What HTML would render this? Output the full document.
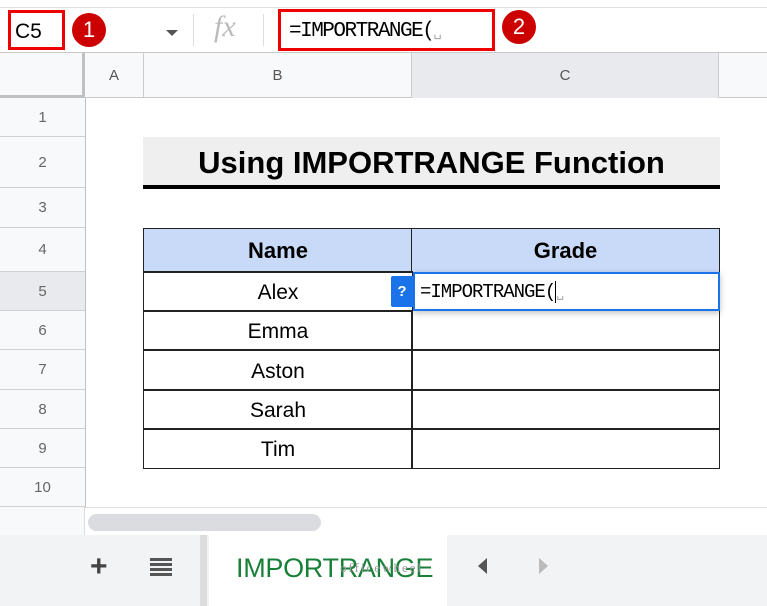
<!DOCTYPE html>
<html><head><style>
*{margin:0;padding:0;box-sizing:border-box}
body{width:767px;height:606px;overflow:hidden;background:#fff;font-family:"Liberation Sans",Arial,sans-serif;position:relative}
.a{position:absolute}
.rn{position:absolute;left:0;width:85px;background:#f8f9fa;border-bottom:1px solid #d0d0d0;color:#666;font-size:15px;text-align:center}
.cell{position:absolute;border:1.5px solid #222;text-align:center;font-size:21px;color:#000}
</style></head><body>
<div class="a" style="left:0;top:0;width:767px;height:8px;background:#fff;border-bottom:1px solid #e0e0e0"></div>
<div class="a" style="left:0;top:52px;width:767px;height:1px;background:#c8c8c8"></div>
<div class="a" style="left:8px;top:10px;width:57px;height:40px;border:3px solid #e00;font-size:21px;padding:7px 0 0 4px">C5</div>
<div class="a" style="left:72px;top:13px;width:34px;height:34px;border-radius:50%;background:#c00;color:#fff;font-size:22px;text-align:center;line-height:34px">1</div>
<div class="a" style="left:166px;top:30px;width:0;height:0;border-left:6px solid transparent;border-right:6px solid transparent;border-top:6px solid #555"></div>
<div class="a" style="left:193px;top:14px;width:1px;height:32px;background:#ddd"></div>
<div class="a" style="left:214px;top:10px;font-family:'Liberation Serif',serif;font-style:italic;font-size:30px;color:#bbb">fx</div>
<div class="a" style="left:263px;top:14px;width:1px;height:32px;background:#ddd"></div>
<div class="a" style="left:278px;top:9px;width:217px;height:42px;border:3px solid #e00;font-family:'Liberation Mono',monospace;font-size:21px;padding:8px 0 0 8px;letter-spacing:-1.5px">=IMPORTRANGE(<span style="color:#aaa;font-size:14px">␣</span></div>
<div class="a" style="left:502px;top:10px;width:34px;height:34px;border-radius:50%;background:#c00;color:#fff;font-size:22px;text-align:center;line-height:34px">2</div>
<div class="a" style="left:0;top:53px;width:767px;height:45px;background:#f8f9fa;border-bottom:1px solid #c8c8c8"></div>
<div class="a" style="left:0;top:53px;width:85px;height:45px;border-right:3px solid #c0c0c0;border-bottom:3px solid #c0c0c0"></div>
<div class="a" style="left:412px;top:53px;width:307px;height:45px;background:#e8eaed"></div>
<div class="a" style="left:85px;top:53px;width:59px;height:45px;border-right:1px solid #ccc;text-align:center;line-height:45px;color:#555;font-size:15px">A</div>
<div class="a" style="left:144px;top:53px;width:268px;height:45px;border-right:1px solid #ccc;text-align:center;line-height:45px;color:#555;font-size:15px">B</div>
<div class="a" style="left:412px;top:53px;width:307px;height:45px;border-right:1px solid #ccc;text-align:center;line-height:45px;color:#555;font-size:15px">C</div>
<div class="a" style="left:85px;top:98px;width:1px;height:437px;background:#c0c0c0"></div>
<div class="rn" style="top:98px;height:39px;line-height:39px">1</div>
<div class="rn" style="top:137px;height:51px;line-height:51px">2</div>
<div class="rn" style="top:188px;height:40px;line-height:40px">3</div>
<div class="rn" style="top:228px;height:44px;line-height:44px">4</div>
<div class="rn" style="top:272px;height:39px;line-height:39px;background:#e8eaed">5</div>
<div class="rn" style="top:311px;height:39px;line-height:39px">6</div>
<div class="rn" style="top:350px;height:40px;line-height:40px">7</div>
<div class="rn" style="top:390px;height:39px;line-height:39px">8</div>
<div class="rn" style="top:429px;height:39px;line-height:39px">9</div>
<div class="rn" style="top:468px;height:39px;line-height:39px">10</div>
<div class="a" style="left:143px;top:137px;width:577px;height:52px;background:#efefef;border-bottom:4px solid #000;text-align:center;font-weight:bold;font-size:31px;line-height:52px">Using IMPORTRANGE Function</div>
<div class="cell" style="left:143px;top:228px;width:270px;height:45px;background:#c9daf8;font-weight:bold;line-height:44px;font-size:22px">Name</div>
<div class="cell" style="left:411px;top:228px;width:309px;height:45px;background:#c9daf8;font-weight:bold;line-height:44px;font-size:22px">Grade</div>
<div class="cell" style="left:143px;top:271px;width:270px;height:41px;line-height:42px">Alex</div>
<div class="cell" style="left:143px;top:310px;width:270px;height:41px;line-height:42px">Emma</div>
<div class="cell" style="left:411px;top:310px;width:309px;height:41px"></div>
<div class="cell" style="left:143px;top:349px;width:270px;height:42px;line-height:43px">Aston</div>
<div class="cell" style="left:411px;top:349px;width:309px;height:42px"></div>
<div class="cell" style="left:143px;top:389px;width:270px;height:41px;line-height:42px">Sarah</div>
<div class="cell" style="left:411px;top:389px;width:309px;height:41px"></div>
<div class="cell" style="left:143px;top:428px;width:270px;height:41px;line-height:42px">Tim</div>
<div class="cell" style="left:411px;top:428px;width:309px;height:41px"></div>
<div class="a" style="left:413px;top:272px;width:307px;height:39px;border:2px solid #1a73e8;background:#fff;box-shadow:0 2px 6px rgba(0,0,0,.25);font-family:'Liberation Mono',monospace;font-size:19px;padding:7px 0 0 5px;letter-spacing:-1px">=IMPORTRANGE(<span style="border-left:1.5px solid #000"></span><span style="color:#aaa;font-size:13px">␣</span></div>
<div class="a" style="left:391px;top:276px;width:22px;height:31px;background:#1a73e8;color:#fff;font-weight:bold;font-size:15px;text-align:center;line-height:31px;border-radius:2px 0 0 2px">?</div>
<div class="a" style="left:0;top:507px;width:767px;height:28px;background:#fff;border-top:1px solid #ddd"></div>
<div class="a" style="left:0;top:507px;width:85px;height:28px;background:#f8f9fa;border-right:1px solid #ddd"></div>
<div class="a" style="left:88px;top:514px;width:233px;height:17px;border-radius:9px;background:#dadce0"></div>
<div class="a" style="left:0;top:535px;width:767px;height:71px;background:#f1f3f4"></div>
<div class="a" style="left:90px;top:550px;font-size:30px;color:#444;font-weight:bold">+</div>
<div class="a" style="left:150px;top:558px;width:22px;height:3px;background:#555;box-shadow:0 5px 0 #555,0 10px 0 #555,0 15px 0 #555"></div>
<div class="a" style="left:200px;top:535px;width:7px;height:71px;background:#ddd"></div>
<div class="a" style="left:209px;top:535px;width:238px;height:71px;background:#fff"></div>
<div class="a" style="left:236px;top:553px;font-size:27px;color:#188038;letter-spacing:-0.3px">IMPORTRANGE</div>
<div class="a" style="left:340px;top:560px;font-family:'Liberation Serif',serif;font-size:13px;color:#999;letter-spacing:2px">officewheel</div>
<div class="a" style="left:478px;top:558px;width:0;height:0;border-top:8px solid transparent;border-bottom:8px solid transparent;border-right:9px solid #555"></div>
<div class="a" style="left:539px;top:558px;width:0;height:0;border-top:8px solid transparent;border-bottom:8px solid transparent;border-left:9px solid #bbb"></div>
</body></html>
